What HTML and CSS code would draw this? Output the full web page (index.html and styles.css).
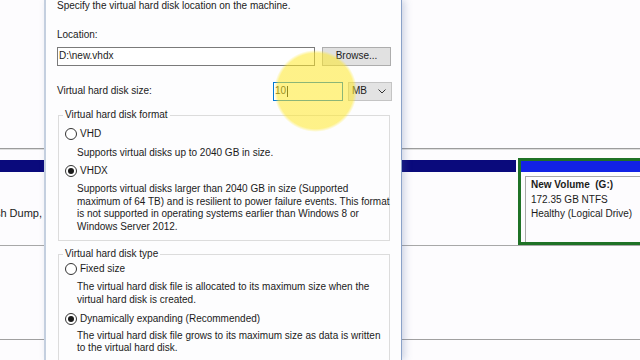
FILE: index.html
```html
<!DOCTYPE html>
<html lang="en">
<head>
<meta charset="utf-8">
<title>New Virtual Hard Disk Wizard</title>
<link rel="stylesheet" href="styles.css">
</head>
<body>
<div class="desktop">
  <div class="mmc">
    <div class="area-top"></div>
    <div class="disk-row">
      <div class="part part-sys">
        <div class="bar bar-navy"></div>
        <div class="sys-text"><span>Healthy (Boot, Page File, Crash Dump,</span></div>
      </div>
      <div class="part part-vol">
        <div class="bar bar-blue"></div>
        <div class="vol-box">
          <div class="vol-name">New Volume&nbsp; (G:)</div>
          <div>172.35 GB NTFS</div>
          <div>Healthy (Logical Drive)</div>
        </div>
      </div>
    </div>
    <div class="area-mid"></div>
    <div class="area-bottom"></div>
  </div>

  <div class="dialog">
    <div class="intro">Specify the virtual hard disk location on the machine.</div>
    <div class="lbl">Location:</div>
    <div class="loc-row">
      <div class="textbox loc-input">D:\new.vhdx</div>
      <div class="button">Browse...</div>
    </div>
    <div class="size-row">
      <div>Virtual hard disk size:</div>
      <div class="textbox size-input focused">10<span class="caret"></span></div>
      <div class="combo">MB
        <svg class="chev" width="8" height="5" viewBox="0 0 8 5"><polyline points="0.5,0.5 4,4 7.5,0.5" fill="none" stroke="#333" stroke-width="1"/></svg>
      </div>
    </div>

    <fieldset class="group group-format">
      <legend>Virtual hard disk format</legend>
      <div class="opt"><span class="radio"></span>VHD</div>
      <div class="desc d1">Supports virtual disks up to 2040 GB in size.</div>
      <div class="opt o2"><span class="radio checked"></span>VHDX</div>
      <div class="desc d2">Supports virtual disks larger than 2040 GB in size (Supported<br>maximum of 64 TB) and is resilient to power failure events. This format<br>is not supported in operating systems earlier than Windows 8 or<br>Windows Server 2012.</div>
    </fieldset>

    <fieldset class="group group-type">
      <legend>Virtual hard disk type</legend>
      <div class="opt"><span class="radio"></span>Fixed size</div>
      <div class="desc t1">The virtual hard disk file is allocated to its maximum size when the<br>virtual hard disk is created.</div>
      <div class="opt t2"><span class="radio checked"></span>Dynamically expanding (Recommended)</div>
      <div class="desc t3">The virtual hard disk file grows to its maximum size as data is written<br>to the virtual hard disk.</div>
    </fieldset>
  </div>

  <div class="spot"></div>
</div>
</body>
</html>
```

FILE: styles.css
```css
* { box-sizing: border-box; }
html, body { margin: 0; padding: 0; }
body {
  width: 640px;
  height: 360px;
  overflow: hidden;
  background: #fdfcfe;
  font-family: "Liberation Sans", Arial, sans-serif;
  font-size: 10px;
  color: #1b1b1b;
}
.desktop { position: relative; width: 640px; height: 360px; overflow: hidden; }

/* background Disk Management window */
.mmc { width: 640px; height: 360px; display: flex; flex-direction: column; }
.mmc > * { flex-shrink: 0; }
.area-top { height: 149px; border-bottom: 1px solid #9c9c9c; box-shadow: 0 1px 0 #dedede; }
.disk-row { display: flex; margin-top: 9px; height: 87px; }
.part { display: flex; flex-direction: column; }
.part-sys { width: 516px; }
.bar { height: 12px; flex-shrink: 0; }
.bar-navy { margin-top: 2px; background: #0a0a7c; }
.sys-text {
  display: flex; justify-content: flex-end; width: 42px;
  white-space: nowrap; font-size: 11px; line-height: 14.5px; margin-top: 34px;
}
.part-vol {
  flex: 1; margin-left: 2px; border: 3px solid #1f7226; border-right: none;
  overflow: hidden; white-space: nowrap;
}
.bar-blue { height: 11px; background: #1222e6; }
.vol-box {
  flex: 1; margin: 4px 0 0 4px; border: 1px solid #a8a8a8; border-right: none; border-bottom: none;
  padding: 1px 0 0 5px; line-height: 14.5px;
}
.vol-name { font-weight: bold; }
.area-mid { height: 94px; border-top: 1px solid #a8a8a8; }
.area-bottom { flex: 1; border-top: 1px solid #a0a0a0; }

/* dialog window */
.dialog {
  position: absolute; top: 0; left: 44px; width: 358px; height: 360px;
  background: #fdfdfe;
  border-left: 2px solid #c4cfdf;
  border-right: 1px solid #8aa2c8;
  box-shadow: 3px 0 7px rgba(70, 100, 150, 0.25);
  padding: 0 9px 0 11px;
  line-height: 12.5px;
  overflow: hidden;
  display: flex; flex-direction: column;
}
.dialog > * { flex-shrink: 0; }
.lbl { margin-top: 16px; }
.loc-row { display: flex; gap: 7px; margin-top: 6px; height: 19px; }
.textbox {
  background: #fff; border: 1px solid #7a7a7a; padding-left: 1px;
  display: flex; align-items: center;
}
.loc-input { width: 258px; }
.button {
  width: 69px; background: #e1e1e1; border: 1px solid #adadad;
  display: flex; align-items: center; justify-content: center;
}
.size-row { display: flex; align-items: center; margin-top: 16px; height: 19px; }
.size-input { margin-left: auto; width: 70px; height: 19px; }
.focused { border-color: #0078d7; }
.caret { display: inline-block; width: 1px; height: 11px; background: #111; margin-left: 1px; }
.combo {
  width: 44px; height: 19px; margin-left: 5px;
  background: #e3e3e3; border: 1px solid #c4c4c4;
  display: flex; align-items: center; justify-content: space-between;
  padding: 0 5px 0 3px;
}

.group {
  margin: 8px 2px 0 1px;
  border: 1px solid #dcdcdc;
  padding: 6px 6px 7px 6px;
  min-width: 0;
}
.group legend { padding: 0 2px; margin-left: -2px; line-height: 12.5px; }
.group-type { margin-top: 7px; padding-top: 2.5px; padding-bottom: 20px; }
.opt { display: flex; align-items: center; gap: 3px; height: 12.5px; white-space: nowrap; }
.radio {
  width: 12px; height: 12px; border: 1px solid #333; border-radius: 50%;
  background: #fff; display: grid; place-items: center; flex-shrink: 0;
}
.radio.checked::after {
  content: ""; width: 6px; height: 6px; border-radius: 50%; background: #1a1a1a;
}
.desc { padding-left: 12px; white-space: nowrap; }
.d1 { margin-top: 7px; }
.o2 { margin-top: 5px; }
.d2 { margin-top: 6px; }
.t1 { margin-top: 5.5px; }
.t2 { margin-top: 6.5px; }
.t3 { margin-top: 4.5px; }

/* cursor highlight */
.spot {
  position: absolute; left: 274px; top: 50px; width: 83px; height: 82px;
  border-radius: 50%; pointer-events: none;
  background: radial-gradient(closest-side, rgba(255, 232, 40, 0.55) 0, rgba(255, 232, 40, 0.55) 92%, rgba(255, 232, 40, 0) 100%);
}
```
